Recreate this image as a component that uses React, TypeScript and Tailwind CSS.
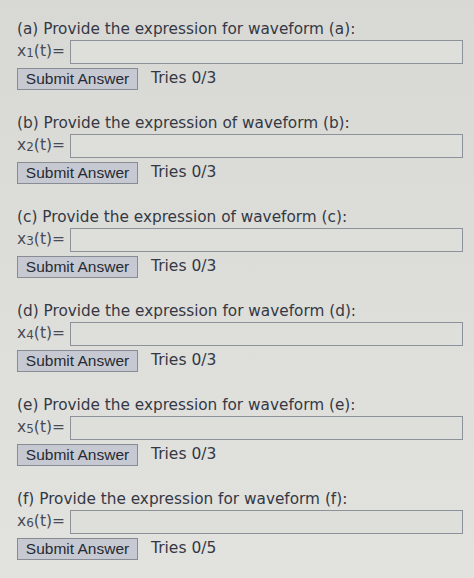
import React from 'react';

interface Part {
    letter: string;
    verb: string;
    sub: string;
    tries: string;
}

const parts: Part[] = [
    { letter: 'a', verb: 'for', sub: '1', tries: 'Tries 0/3' },
    { letter: 'b', verb: 'of', sub: '2', tries: 'Tries 0/3' },
    { letter: 'c', verb: 'of', sub: '3', tries: 'Tries 0/3' },
    { letter: 'd', verb: 'for', sub: '4', tries: 'Tries 0/3' },
    { letter: 'e', verb: 'for', sub: '5', tries: 'Tries 0/3' },
    { letter: 'f', verb: 'for', sub: '6', tries: 'Tries 0/5' },
];

const verdana = { fontFamily: '"DejaVu Sans", Verdana, sans-serif' };

const PartBlock: React.FC<Part> = ({ letter, verb, sub, tries }) => (
    <div className="h-[94px]">
        <div className="h-[20px] text-[15.3px] leading-[21px] text-[#343844] whitespace-nowrap" style={verdana}>
            ({letter}) Provide the expression {verb} waveform ({letter}):
        </div>
        <div className="flex items-center h-[26px]">
            <span className="w-[53px] text-[15.5px] text-[#474b57] whitespace-nowrap" style={verdana}>
                x<sub className="text-[12px] relative top-[1px]">{sub}</sub>(t)=
            </span>
            <div className="w-[393px] h-[24px] border border-[#8d929a] bg-[#dedfdb]" />
        </div>
        <div className="flex items-center mt-[3px] h-[22px]">
            <button
                className="w-[121px] h-[22px] border border-[#868b94] bg-[#c6c9d1] text-[15.5px] text-[#262a32] leading-none"
                style={{ fontFamily: '"Liberation Sans", Arial, sans-serif' }}
            >
                Submit Answer
            </button>
            <span className="ml-[13px] text-[15.5px] text-[#343844]" style={verdana}>{tries}</span>
        </div>
    </div>
);

const App: React.FC = () => {
    return (
        <div className="w-[474px] h-[578px] overflow-hidden bg-gradient-to-b from-[#d8d9d5] to-[#e2e2de] pl-[17px] pt-[19px]">
            {parts.map(p => <PartBlock key={p.letter} {...p} />)}
        </div>
    );
};

export default App;
